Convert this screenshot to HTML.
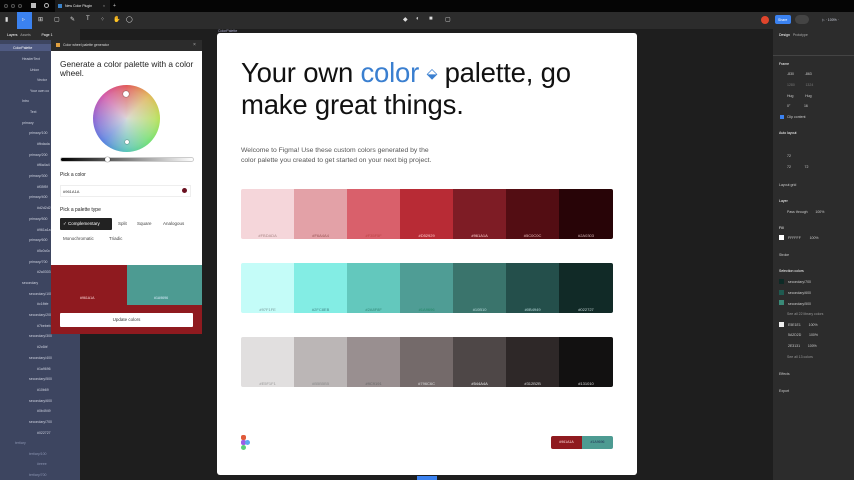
<!DOCTYPE html>
<html><head><meta charset="utf-8"><style>
*{margin:0;padding:0;box-sizing:border-box}
body{width:854px;height:480px;background:#1e1e1e;position:relative;overflow:hidden;font-family:"Liberation Sans",sans-serif;color:#fff}
.a{position:absolute}
.t{font-size:3.5px;color:#cfd3e0;white-space:nowrap}
.sw{position:absolute;top:0;height:50px;width:53.2px;font-size:4px;text-align:center;padding-top:44px}
.rt{font-size:3.5px;color:#ccc;white-space:nowrap;position:absolute}
.ic{position:absolute;top:16px;font-size:6px;color:#ddd}
</style></head><body>
<!-- title bar -->
<div class="a" style="left:0;top:0;width:854px;height:12px;background:#050505"></div>
<div class="a" style="left:4px;top:4px;width:4px;height:4px;border:1px solid #555;border-radius:50%"></div>
<div class="a" style="left:11px;top:4px;width:4px;height:4px;border:1px solid #555;border-radius:50%"></div>
<div class="a" style="left:18px;top:4px;width:4px;height:4px;border:1px solid #555;border-radius:50%"></div>
<div class="a" style="left:31px;top:3px;width:5px;height:5px;background:#bbb"></div>
<div class="a" style="left:44px;top:3px;width:5px;height:5px;border:1px solid #bbb;border-radius:50%"></div>
<div class="a" style="left:55px;top:0;width:55px;height:12px;background:#1a1a1a"></div>
<div class="a" style="left:58px;top:4px;width:4px;height:4px;background:#3b82c9"></div>
<div class="a t" style="left:65px;top:4px;color:#eee">New Color Plugin</div>
<div class="a t" style="left:103px;top:4px;color:#aaa">×</div>
<div class="a t" style="left:113px;top:3px;color:#ccc;font-size:5px">+</div>
<!-- toolbar -->
<div class="a" style="left:0;top:12px;width:854px;height:17px;background:#2c2c2c"></div>
<div class="a" style="left:17px;top:12px;width:15px;height:17px;background:#3b82f0"></div>
<div class="ic" style="left:5px">▮</div>
<div class="ic" style="left:22px">▹</div>
<div class="ic" style="left:38px">⊞</div>
<div class="ic" style="left:54px">▢</div>
<div class="ic" style="left:70px">✎</div>
<div class="ic" style="left:86px">T</div>
<div class="ic" style="left:100px">⁘</div>
<div class="ic" style="left:113px">✋</div>
<div class="ic" style="left:126px">◯</div>
<div class="ic" style="left:403px">◆</div>
<div class="ic" style="left:416px">◐</div>
<div class="ic" style="left:429px">■</div>
<div class="ic" style="left:445px">▢</div>
<div class="a" style="left:761px;top:16px;width:8px;height:8px;border-radius:50%;background:#e0452c"></div>
<div class="a" style="left:775px;top:15px;width:16px;height:9px;background:#3b82f0;border-radius:2px"></div>
<div class="a t" style="left:778px;top:18px;color:#fff">Share</div>
<div class="a" style="left:795px;top:15px;width:14px;height:9px;background:#444;border-radius:5px"></div>
<div class="a t" style="left:822px;top:18px">▷ · 100% ·</div>
<!-- left panel -->
<div class="a" style="left:0;top:29px;width:80px;height:451px;background:#3d4560"></div>
<div class="a" style="left:0;top:29px;width:80px;height:11px;background:#2c2c2c"></div>
<div class="a t" style="left:7px;top:33px;color:#fff">Layers &nbsp; <span style="color:#aaa">Assets</span> &nbsp;&nbsp;&nbsp;&nbsp;&nbsp;&nbsp;&nbsp;&nbsp;&nbsp; Page 1</div>
<div class="a" style="left:0;top:44px;width:80px;height:7px;background:#4f5a82"></div>
<div class="a t" style="left:13px;top:46px;color:#fff">ColorPalette</div>
<div class="a t" style="left:22px;top:57px">HeaderText</div>
<div class="a t" style="left:30px;top:68px">Union</div>
<div class="a t" style="left:37px;top:78px">Vector</div>
<div class="a t" style="left:30px;top:89px">Your own co</div>
<div class="a t" style="left:22px;top:99px">Intro</div>
<div class="a t" style="left:30px;top:110px">Text</div>
<div class="a t" style="left:22px;top:121px">primary</div>
<div class="a t" style="left:29px;top:131px">primary/100</div><div class="a t" style="left:37px;top:142px">#fbdada</div>
<div class="a t" style="left:29px;top:153px">primary/200</div><div class="a t" style="left:37px;top:163px">#f6a4a4</div>
<div class="a t" style="left:29px;top:174px">primary/300</div><div class="a t" style="left:37px;top:185px">#f35f5f</div>
<div class="a t" style="left:29px;top:195px">primary/400</div><div class="a t" style="left:37px;top:206px">#d2d2d2</div>
<div class="a t" style="left:29px;top:217px">primary/500</div><div class="a t" style="left:37px;top:228px">#961a1a</div>
<div class="a t" style="left:29px;top:238px">primary/600</div><div class="a t" style="left:37px;top:249px">#5c0c0c</div>
<div class="a t" style="left:29px;top:260px">primary/700</div><div class="a t" style="left:37px;top:270px">#2a0303</div>
<div class="a t" style="left:22px;top:281px">secondary</div>
<div class="a t" style="left:29px;top:292px">secondary/100</div><div class="a t" style="left:37px;top:302px">#c1fbfe</div>
<div class="a t" style="left:29px;top:313px">secondary/200</div><div class="a t" style="left:37px;top:324px">#7bebeb</div>
<div class="a t" style="left:29px;top:334px">secondary/300</div><div class="a t" style="left:37px;top:345px">#2c6bf</div>
<div class="a t" style="left:29px;top:356px">secondary/400</div><div class="a t" style="left:37px;top:367px">#1a9696</div>
<div class="a t" style="left:29px;top:377px">secondary/500</div><div class="a t" style="left:37px;top:388px">#10b69</div>
<div class="a t" style="left:29px;top:399px">secondary/600</div><div class="a t" style="left:37px;top:409px">#0b4949</div>
<div class="a t" style="left:29px;top:420px">secondary/700</div><div class="a t" style="left:37px;top:431px">#022727</div>
<div class="a t" style="left:15px;top:441px;color:#8a93b0">tertiary</div>
<div class="a t" style="left:29px;top:452px;color:#8a93b0">tertiary/100</div>
<div class="a t" style="left:37px;top:462px;color:#8a93b0">#eeee</div>
<div class="a t" style="left:29px;top:473px;color:#8a93b0">tertiary/700</div>
<!-- plugin window -->
<div class="a" style="left:51px;top:40px;width:151px;height:11px;background:#2c2c2c"></div>
<div class="a" style="left:56px;top:43px;width:4px;height:4px;background:#e0a040"></div>
<div class="a t" style="left:63px;top:43px;color:#ddd">Color wheel palette generator</div>
<div class="a t" style="left:193px;top:42px;color:#aaa;font-size:5px">×</div>
<div class="a" style="left:51px;top:51px;width:151px;height:214px;background:#fff"></div>
<div class="a" style="left:60px;top:60px;width:140px;font-size:8.3px;line-height:9px;color:#222">Generate a color palette with a color wheel.</div>
<div class="a" style="left:93px;top:85px;width:67px;height:67px;border-radius:50%;background:radial-gradient(circle,rgba(220,220,220,.95),rgba(230,230,230,.3) 60%,rgba(255,255,255,0) 80%),conic-gradient(#e04040,#e0b040,#b0e040,#60e060,#40c0b0,#4070e0,#8050d0,#d040a0,#e04040)"></div>
<div class="a" style="left:123px;top:91px;width:6px;height:6px;border-radius:50%;background:#fff;box-shadow:0 0 1px #000"></div>
<div class="a" style="left:125px;top:140px;width:4px;height:4px;border-radius:50%;background:#fff;box-shadow:0 0 1px #000"></div>
<div class="a" style="left:60px;top:157px;width:134px;height:5px;border-radius:3px;background:linear-gradient(90deg,#000,#fff);border:0.5px solid #ccc"></div>
<div class="a" style="left:105px;top:157px;width:5px;height:5px;border-radius:50%;background:#fff;box-shadow:0 0 1px #000"></div>
<div class="a" style="left:60px;top:172px;font-size:5px;color:#222">Pick a color</div>
<div class="a" style="left:60px;top:185px;width:131px;height:12px;border:0.5px solid #eee"></div>
<div class="a" style="left:63px;top:189px;font-size:4px;color:#333">#961A1A</div>
<div class="a" style="left:182px;top:188px;width:5px;height:5px;border-radius:50%;background:#6a1020"></div>
<div class="a" style="left:60px;top:207px;font-size:5px;color:#222">Pick a palette type</div>
<div class="a" style="left:60px;top:218px;width:52px;height:12px;background:#222;border-radius:1px"></div>
<div class="a" style="left:63px;top:221px;font-size:4.5px;color:#fff">✓ Complementary</div>
<div class="a" style="left:118px;top:221px;font-size:4.5px;color:#444">Split</div>
<div class="a" style="left:137px;top:221px;font-size:4.5px;color:#444">Square</div>
<div class="a" style="left:163px;top:221px;font-size:4.5px;color:#444">Analogous</div>
<div class="a" style="left:63px;top:236px;font-size:4.5px;color:#444">Monochromatic</div>
<div class="a" style="left:109px;top:236px;font-size:4.5px;color:#444">Triadic</div>
<div class="a" style="left:51px;top:265px;width:76px;height:40px;background:#8f1a1f"></div>
<div class="a" style="left:127px;top:265px;width:75px;height:40px;background:#4d9b92"></div>
<div class="a" style="left:80px;top:296px;font-size:3.5px;color:#fdd">#961A1A</div>
<div class="a" style="left:154px;top:296px;font-size:3.5px;color:#def">#1A9696</div>
<div class="a" style="left:51px;top:305px;width:151px;height:29px;background:#8f1a1f"></div>
<div class="a" style="left:60px;top:313px;width:133px;height:14px;background:#fff;border-radius:1px;font-size:4.5px;color:#333;text-align:center;line-height:14px">Update colors</div>
<!-- frame -->
<div class="a t" style="left:218px;top:29px;color:#aac">ColorPalette</div>
<div class="a" style="left:217px;top:33px;width:420px;height:442px;background:#fff;border-radius:3px"></div>
<div class="a" style="left:241px;top:57px;font-size:27.5px;line-height:31px;color:#111;letter-spacing:-0.2px;white-space:nowrap">Your own <span style="color:#3a7fd0">color</span> <span style="color:#3a7fd0;font-size:14px;vertical-align:4px">⬙</span> palette, go<br>make great things.</div>
<div class="a" style="left:241px;top:146px;font-size:6.8px;line-height:10px;color:#555;white-space:nowrap">Welcome to Figma! Use these custom colors generated by the<br>color palette you created to get started on your next big project.</div>
<div class="a" style="left:241px;top:189px;width:372px;height:50px;border-radius:2px;overflow:hidden">
<div class="sw" style="left:0;background:#f5d6da;color:#a88">#FBDADA</div>
<div class="sw" style="left:53px;background:#e3a1a7;color:#955">#F6A4A4</div>
<div class="sw" style="left:106px;background:#d9606b;color:#b44">#F35F5F</div>
<div class="sw" style="left:159px;background:#b82b35;color:#fcc">#D52929</div>
<div class="sw" style="left:212px;background:#7e1c25;color:#fcc">#961A1A</div>
<div class="sw" style="left:265px;background:#530d13;color:#ebb">#5C0C0C</div>
<div class="sw" style="left:318px;width:54px;background:#280407;color:#dbb">#2A0303</div></div>
<div class="a" style="left:241px;top:263px;width:372px;height:50px;border-radius:2px;overflow:hidden">
<div class="sw" style="left:0;background:#c4fcf8;color:#799">#97F1FE</div>
<div class="sw" style="left:53px;background:#83ede4;color:#488">#2FC8EB</div>
<div class="sw" style="left:106px;background:#63c8bd;color:#387">#2A8F8F</div>
<div class="sw" style="left:159px;background:#4f9d95;color:#286">#1A9696</div>
<div class="sw" style="left:212px;background:#3a746c;color:#bdd">#10B10</div>
<div class="sw" style="left:265px;background:#244f4b;color:#bdd">#0B4949</div>
<div class="sw" style="left:318px;width:54px;background:#112a27;color:#cdd">#022727</div></div>
<div class="a" style="left:241px;top:337px;width:372px;height:50px;border-radius:2px;overflow:hidden">
<div class="sw" style="left:0;background:#e1dfdf;color:#999">#E5F1F1</div>
<div class="sw" style="left:53px;background:#bbb6b6;color:#888">#B5B5B5</div>
<div class="sw" style="left:106px;background:#998f90;color:#666">#9C9191</div>
<div class="sw" style="left:159px;background:#746a6a;color:#ddd">#796C6C</div>
<div class="sw" style="left:212px;background:#4e4747;color:#eee">#544A4A</div>
<div class="sw" style="left:265px;background:#2e2828;color:#ddd">#312B2B</div>
<div class="sw" style="left:318px;width:54px;background:#121111;color:#ddd">#131010</div></div>
<div class="a" style="left:241px;top:435px;width:5px;height:5px;background:#e05a3a;border-radius:2px"></div>
<div class="a" style="left:241px;top:440px;width:5px;height:5px;background:#9b5de5;border-radius:2px"></div>
<div class="a" style="left:245px;top:440px;width:5px;height:5px;background:#5aa8f0;border-radius:50%"></div>
<div class="a" style="left:241px;top:445px;width:5px;height:5px;background:#5ad07a;border-radius:50%"></div>
<div class="a" style="left:551px;top:436px;width:31px;height:13px;background:#8f1a1f;border-radius:2px 0 0 2px;font-size:3.5px;line-height:13px;text-align:center;color:#fdd">#961A1A</div>
<div class="a" style="left:582px;top:436px;width:31px;height:13px;background:#4d9b92;border-radius:0 2px 2px 0;font-size:3.5px;line-height:13px;text-align:center;color:#235">#1A9696</div>
<div class="a" style="left:417px;top:476px;width:20px;height:4px;background:#3b82f0"></div>
<!-- right panel -->
<div class="a" style="left:773px;top:29px;width:81px;height:451px;background:#2c2c2c"></div>
<div class="rt" style="left:779px;top:33px;color:#fff">Design &nbsp; <span style="color:#aaa">Prototype</span></div>
<div class="a" style="left:773px;top:55px;width:81px;height:0.5px;background:#444"></div>
<div class="rt" style="left:779px;top:62px;color:#fff">Frame</div>
<div class="rt" style="left:787px;top:72px">-830 &nbsp;&nbsp;&nbsp;&nbsp;&nbsp;&nbsp;&nbsp;&nbsp;&nbsp; -863</div>
<div class="rt" style="left:787px;top:83px;color:#777">1280 &nbsp;&nbsp;&nbsp;&nbsp;&nbsp;&nbsp;&nbsp;&nbsp;&nbsp; 1324</div>
<div class="rt" style="left:787px;top:94px">Hug &nbsp;&nbsp;&nbsp;&nbsp;&nbsp;&nbsp;&nbsp;&nbsp;&nbsp;&nbsp; Hug</div>
<div class="rt" style="left:787px;top:104px">0° &nbsp;&nbsp;&nbsp;&nbsp;&nbsp;&nbsp;&nbsp;&nbsp;&nbsp;&nbsp;&nbsp;&nbsp; 16</div>
<div class="a" style="left:780px;top:115px;width:4px;height:4px;background:#3b82f0"></div>
<div class="rt" style="left:787px;top:115px">Clip content</div>
<div class="rt" style="left:779px;top:131px;color:#fff">Auto layout</div>
<div class="rt" style="left:787px;top:154px">72</div>
<div class="rt" style="left:787px;top:165px">72 &nbsp;&nbsp;&nbsp;&nbsp;&nbsp;&nbsp;&nbsp;&nbsp;&nbsp;&nbsp;&nbsp;&nbsp; 72</div>
<div class="rt" style="left:779px;top:183px">Layout grid</div>
<div class="rt" style="left:779px;top:199px;color:#fff">Layer</div>
<div class="rt" style="left:787px;top:210px">Pass through &nbsp;&nbsp;&nbsp;&nbsp;&nbsp;&nbsp; 100%</div>
<div class="rt" style="left:779px;top:226px;color:#fff">Fill</div>
<div class="a" style="left:779px;top:235px;width:5px;height:5px;background:#fff"></div>
<div class="rt" style="left:788px;top:236px">FFFFFF &nbsp;&nbsp;&nbsp;&nbsp;&nbsp;&nbsp;&nbsp; 100%</div>
<div class="rt" style="left:779px;top:253px">Stroke</div>
<div class="rt" style="left:779px;top:269px;color:#fff">Selection colors</div>
<div class="a" style="left:779px;top:279px;width:5px;height:5px;background:#0e2a26"></div>
<div class="rt" style="left:788px;top:280px">secondary/700</div>
<div class="a" style="left:779px;top:290px;width:5px;height:5px;background:#1f5a50"></div>
<div class="rt" style="left:788px;top:291px">secondary/600</div>
<div class="a" style="left:779px;top:300px;width:5px;height:5px;background:#3a8a78"></div>
<div class="rt" style="left:788px;top:302px">secondary/500</div>
<div class="rt" style="left:787px;top:312px;color:#999">See all 22 library colors</div>
<div class="a" style="left:779px;top:322px;width:5px;height:5px;background:#eee"></div>
<div class="rt" style="left:788px;top:323px">E5E1E1 &nbsp;&nbsp;&nbsp;&nbsp;&nbsp;&nbsp; 100%</div>
<div class="rt" style="left:788px;top:333px">5A2D2D &nbsp;&nbsp;&nbsp;&nbsp;&nbsp;&nbsp; 100%</div>
<div class="rt" style="left:788px;top:344px">2E3131 &nbsp;&nbsp;&nbsp;&nbsp;&nbsp;&nbsp; 100%</div>
<div class="rt" style="left:787px;top:355px;color:#999">See all 13 colors</div>
<div class="rt" style="left:779px;top:372px">Effects</div>
<div class="rt" style="left:779px;top:389px">Export</div>
</body></html>
